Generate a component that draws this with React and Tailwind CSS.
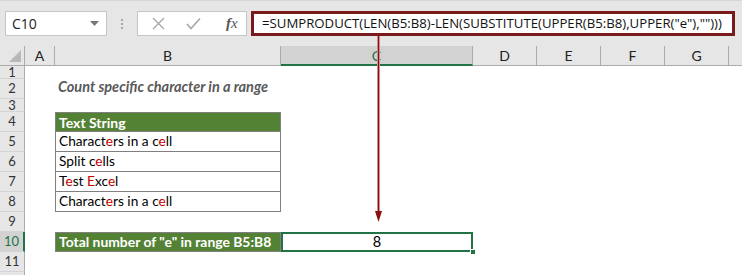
import React from 'react'

const COLS = ['A', 'B', 'C', 'D', 'E', 'F', 'G']
const ROW_H = [13, 20, 13, 20, 20, 20, 20, 20, 20, 20, 20, 20]

const cellFont = { fontFamily: 'Lato, "Open Sans", sans-serif' }

// colour every e / E red, like the sample data
const RedE = ({ text }) => (
  <span>
    {text.split('').map((ch, i) =>
      ch === 'e' || ch === 'E' ? (
        <span key={i} className="text-[#c00000]">{ch}</span>
      ) : (
        <span key={i}>{ch}</span>
      )
    )}
  </span>
)

const ColHeader = ({ label, active }) => (
  <div
    className={
      active
        ? 'flex items-center justify-center bg-[#d2d2d2] border-r border-[#ababab] border-b-2 border-b-[#217346] text-[#217346] text-[14px]'
        : 'flex items-center justify-center bg-[#e6e6e6] border-r border-[#ababab] border-b border-b-[#ababab] text-[#222] text-[14px]'
    }
  >
    {label}
  </div>
)

const RowHeader = ({ n, h, active }) => (
  <div
    style={{ height: h }}
    className={
      active
        ? 'flex items-center justify-center bg-[#d2d2d2] border-b border-[#d4d4d4] border-r-2 border-r-[#217346] text-[#217346] text-[13px] leading-none'
        : 'flex items-center justify-center bg-[#e6e6e6] border-b border-[#d4d4d4] border-r border-r-[#ababab] text-[#333] text-[13px] leading-none overflow-hidden'
    }
  >
    {n}
  </div>
)

const TableCell = ({ children, top }) => (
  <div
    className={
      'flex items-center pl-[3px] text-[13.7px] text-black border-x border-b border-[#808080] ' +
      (top ? 'border-t' : '')
    }
  >
    {children}
  </div>
)

export default function App() {
  return (
    <div
      className="relative w-[742px] h-[275px] overflow-hidden bg-white"
      style={{ fontFamily: '"Segoe UI", "Open Sans", sans-serif' }}
    >
      {/* ribbon strip + formula bar */}
      <div className="bg-[#e6e6e6] h-[46px] flex flex-col">
        <div className="h-[11px] border-t border-[#d6d6d6]" />
        <div className="flex items-stretch h-[25px]">
          <div className="ml-[5px] w-[102px] bg-white border border-[#c6c6c6] flex items-center justify-between pl-[6px] pr-[7px]">
            <span className="text-[14px] text-[#222]" style={{ fontFamily: '"Open Sans", sans-serif' }}>C10</span>
            <svg width="9" height="5" viewBox="0 0 9 5">
              <path d="M0 0 L9 0 L4.5 5 Z" fill="#777" />
            </svg>
          </div>
          <div className="w-[30px] flex flex-col items-center justify-center gap-[2px]">
            <span className="w-[2px] h-[2px] bg-[#a8a8a8]" />
            <span className="w-[2px] h-[2px] bg-[#a8a8a8]" />
            <span className="w-[2px] h-[2px] bg-[#a8a8a8]" />
          </div>
          <div className="w-[110px] bg-white border border-[#c6c6c6] flex items-center pl-[14px] gap-[21px]">
            <svg width="13" height="13" viewBox="0 0 13 13">
              <path d="M1 1 L12 12 M12 1 L1 12" stroke="#a6a6a6" strokeWidth="1.3" />
            </svg>
            <svg width="15" height="13" viewBox="0 0 15 13">
              <path d="M1 7 L5 11.5 L14 1.5" stroke="#a6a6a6" strokeWidth="1.6" fill="none" />
            </svg>
            <span className="ml-[4px] italic text-[15px] text-[#555]" style={{ fontFamily: '"Liberation Serif", serif' }}>
              <span className="font-bold">f</span>x
            </span>
          </div>
          <div className="ml-[4px] w-[484px] bg-white border-[3px] border-[#7b1a1a] flex items-center pl-[8px] text-[13.2px] text-[#111] whitespace-nowrap overflow-hidden" style={{ fontFamily: '"Open Sans", sans-serif' }}>
            =SUMPRODUCT(LEN(B5:B8)-LEN(SUBSTITUTE(UPPER(B5:B8),UPPER("e"),"")))
          </div>
        </div>
      </div>

      {/* sheet */}
      <div
        className="grid"
        style={{
          gridTemplateColumns: '25px 30px 226px 192px 64px 64px 64px 64px 13px',
          gridTemplateRows: `20px ${ROW_H.map((h) => h + 'px').join(' ')}`,
          ...cellFont,
        }}
      >
        {/* corner */}
        <div className="relative bg-[#e6e6e6] border-r border-b border-[#ababab]">
          <svg className="absolute right-[3px] bottom-[3px]" width="12" height="12" viewBox="0 0 12 12">
            <path d="M12 0 L12 12 L0 12 Z" fill="#b8b8b8" />
          </svg>
        </div>
        {COLS.map((c) => (
          <ColHeader key={c} label={c} active={c === 'C'} />
        ))}
        <div className="bg-[#e6e6e6] border-b border-[#ababab]" />

        {ROW_H.map((h, i) => {
          const r = i + 1
          return (
            <React.Fragment key={r}>
              <RowHeader n={r} h={h} active={r === 10} />
              <div />
              {r === 2 ? (
                <div className="flex items-end pl-[3px] pb-[1px] italic font-bold text-[14.5px] text-[#595959] whitespace-nowrap">
                  Count specific character in a range
                </div>
              ) : r === 4 ? (
                <div className="flex items-center pl-[3px] bg-[#548235] border border-[#808080] text-white font-bold text-[14px]">
                  Text String
                </div>
              ) : r === 5 || r === 8 ? (
                <TableCell><RedE text="Characters in a cell" /></TableCell>
              ) : r === 6 ? (
                <TableCell><RedE text="Split cells" /></TableCell>
              ) : r === 7 ? (
                <TableCell><RedE text="Test Excel" /></TableCell>
              ) : r === 10 ? (
                <div className="flex items-center pl-[3px] bg-[#548235] border border-[#808080] text-white font-bold text-[13.9px] whitespace-nowrap">
                  Total number of "e" in range B5:B8
                </div>
              ) : (
                <div />
              )}
              {r === 10 ? (
                <div className="relative flex items-center justify-center border-2 border-[#217346] text-[14.5px] text-black">
                  8
                  <span className="absolute right-[-5px] bottom-[-5px] w-[6px] h-[6px] bg-[#217346] border border-white" />
                </div>
              ) : (
                <div />
              )}
              <div />
              <div />
              <div />
              <div />
              <div />
            </React.Fragment>
          )
        })}
      </div>

      {/* trace arrow from the formula to the result cell */}
      <svg className="absolute left-0 top-0 pointer-events-none" width="742" height="275" viewBox="0 0 742 275">
        <line x1="378.5" y1="36" x2="378.5" y2="214" stroke="#c98b8b" strokeWidth="3" />
        <line x1="378.5" y1="36" x2="378.5" y2="214" stroke="#8b0f0f" strokeWidth="1" />
        <path d="M375 211 L382 211 L378.5 222 Z" fill="#8b0f0f" />
      </svg>
    </div>
  )
}
